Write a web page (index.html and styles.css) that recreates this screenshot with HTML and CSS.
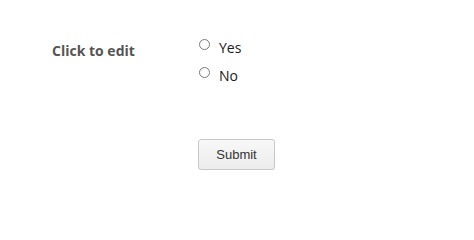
FILE: index.html
```html
<!DOCTYPE html>
<html>
<head>
<meta charset="utf-8">
<link rel="stylesheet" href="styles.css">
</head>
<body>
<form class="form">
  <div class="field">
    <div class="field-label">Click to edit</div>
    <div class="options">
      <label class="option"><input type="radio" name="choice" class="radio"><span>Yes</span></label>
      <label class="option"><input type="radio" name="choice" class="radio"><span>No</span></label>
    </div>
  </div>
  <div class="actions">
    <button type="button" class="submit">Submit</button>
  </div>
</form>
</body>
</html>
```

FILE: styles.css
```css
html, body {
  margin: 0;
  padding: 0;
  background: #fff;
}
.form {
  padding: 38px 0 0 52px;
  font-family: "Open Sans", "Liberation Sans", sans-serif;
  font-size: 14px;
}
.field {
  display: grid;
  grid-template-columns: 147px auto;
}
.field-label {
  font-weight: 700;
  color: #555;
  line-height: 20px;
  padding-top: 3px;
}
.options {
  display: flex;
  flex-direction: column;
  gap: 8px;
}
.option {
  display: flex;
  align-items: flex-start;
  line-height: 20px;
  color: #1a1a1a;
}
.radio {
  appearance: none;
  -webkit-appearance: none;
  width: 11px;
  height: 11px;
  margin: 1px 9px 0 0;
  border: 1px solid #7a7a7a;
  border-radius: 50%;
  background: #fff;
  box-sizing: border-box;
}
.actions {
  padding: 53px 0 0 146px;
}
.submit {
  width: 77px;
  height: 31px;
  font-family: "Liberation Sans", Arial, sans-serif;
  font-size: 13px;
  color: #333;
  background: linear-gradient(#f8f8f8, #ececec);
  border: 1px solid #c8c8c8;
  border-radius: 3px;
  padding: 0;
  box-shadow: 0 1px 1px rgba(0,0,0,0.06);
}
```
